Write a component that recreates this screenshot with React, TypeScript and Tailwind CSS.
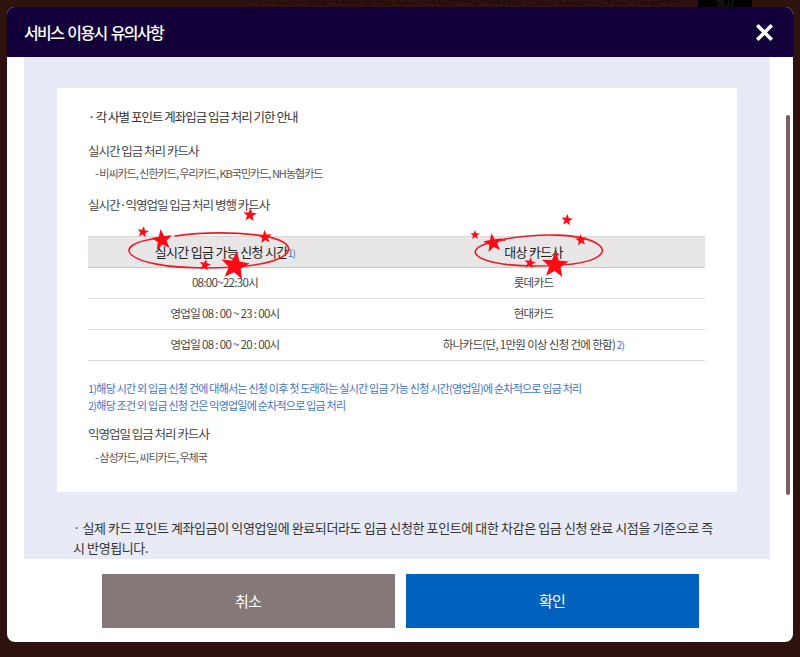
import React from "react";

const FONT = { fontFamily: '"Noto Sans CJK KR", "Noto Sans", sans-serif' };

function starPoints(cx: number, cy: number, r: number, rot = 0) {
  const pts: string[] = [];
  const inner = r * 0.42;
  for (let i = 0; i < 10; i++) {
    const rad = i % 2 === 0 ? r : inner;
    const a = ((-90 + rot + i * 36) * Math.PI) / 180;
    pts.push(`${(cx + rad * Math.cos(a)).toFixed(1)},${(cy + rad * Math.sin(a)).toFixed(1)}`);
  }
  return pts.join(" ");
}

const stars: [number, number, number, number][] = [
  [143, 232, 6, 10],
  [162, 240, 11, -8],
  [250, 215, 7, 5],
  [265, 237, 7, -5],
  [205, 265, 6, 12],
  [235, 266, 15, 8],
  [475, 235, 5, 0],
  [493, 243, 10, -10],
  [567, 220, 6, 6],
  [581, 240, 6, -6],
  [530, 263, 6, 10],
  [555, 265, 14, 4],
];

function Doodle() {
  return (
    <svg
      className="absolute left-0 top-0 pointer-events-none"
      width={680}
      height={404}
      viewBox="57 88 680 404"
    >
      <g fill="none" stroke="#ef1b24" strokeWidth={1.6} strokeLinecap="round">
        <path d="M160 238 C 105 244, 125 268, 205 268 C 280 268, 300 252, 283 242 C 268 233, 215 230, 175 236" />
        <path d="M505 240 C 455 246, 470 266, 535 266 C 600 266, 612 252, 596 243 C 580 234, 540 232, 500 240" />
      </g>
      <g fill="#ff0a14">
        {stars.map(([x, y, r, rot], i) => (
          <polygon key={i} points={starPoints(x, y, r, rot)} />
        ))}
      </g>
    </svg>
  );
}

export default function App() {
  return (
    <div className="relative w-[800px] h-[657px] overflow-hidden bg-[#2e1210]" style={FONT}>
      {/* underlying page, mostly covered */}
      <div className="flex items-start h-[8px] overflow-hidden">
        <div className="ml-[238px] mt-[-9px] text-[12px] leading-[16px] tracking-[-0.06em] text-[#1a0705] whitespace-nowrap">
          ・ 카드 포인트 입금의 최소 금액은 1포인트(1원)이며, 계좌입금 신청은 1포인트 단위로 가능합니다.
        </div>
        <div className="ml-auto mr-[48px] w-[54px] h-[8px] bg-[#050000] text-[10px] leading-[8px] text-[#222] text-center">
          예시
        </div>
      </div>

      {/* modal */}
      <div className="absolute left-[7px] top-[7px] w-[786px] h-[635px] rounded-[8px] bg-white overflow-hidden flex flex-col">
        <div className="h-[50px] shrink-0 bg-[#12003a] flex items-center pl-[17px] pr-[20px]">
          <div className="text-white text-[16px] font-medium tracking-[-0.1em] [word-spacing:2px]">서비스 이용시 유의사항</div>
          <svg className="ml-auto" width="17" height="17" viewBox="0 0 17 17">
            <path d="M2.5 2.5 L14.5 14.5 M14.5 2.5 L2.5 14.5" stroke="white" strokeWidth="3.6" strokeLinecap="square" />
          </svg>
        </div>

        <div className="flex h-[502px] shrink-0">
          <div className="ml-[17px] w-[746px] h-[502px] bg-[#e8eaf6] overflow-hidden">
            <div className="mt-[-15px] h-[16px] pl-[66px] text-[12px] leading-[16px] tracking-[-0.07em] text-[#555] whitespace-nowrap">
              ・ 카드 포인트 입금은 1포인트 1원으로 입금되며, 계좌입금 신청은 결제일 3영업일 전까지만 가능합니다.
            </div>
            <div className="relative ml-[33px] mt-[30px] w-[680px] h-[404px] bg-white pl-[31px] text-[#333]">
              <div className="pt-[21px] h-[37px] text-[12.5px] leading-[16px] tracking-[-0.08em] text-[#333]">
                · 각 사별 포인트 계좌입금 입금 처리 기한 안내
              </div>
              <div className="mt-[18px] h-[16px] text-[12.5px] leading-[16px] tracking-[-0.08em] text-[#444]">
                실시간 입금 처리 카드사
              </div>
              <div className="mt-[6px] h-[16px] pl-[7px] text-[11px] leading-[16px] tracking-[-0.09em] text-[#555]">
                - 비씨카드, 신한카드, 우리카드, KB국민카드, NH농협카드
              </div>
              <div className="mt-[16px] h-[16px] text-[12.5px] leading-[16px] tracking-[-0.08em] text-[#444]">
                실시간·익영업일 입금 처리 병행 카드사
              </div>

              <div className="mt-[23px] w-[617px] text-[11.5px] tracking-[-0.06em] text-[#444]">
                <div className="flex h-[32px] bg-[#e8e6e6] border-t border-[#d9d6d6] border-b border-b-[#cfcccc] items-center text-[13px] text-[#222]">
                  <div className="w-[274px] text-center">
                    실시간 입금 가능 신청 시간<span className="text-[#3d74c5] text-[10px]">1)</span>
                  </div>
                  <div className="flex-1 text-center">대상 카드사</div>
                </div>
                <div className="flex h-[31px] items-center border-b border-[#dddddd]">
                  <div className="w-[274px] text-center">08:00~22:30시</div>
                  <div className="flex-1 text-center">롯데카드</div>
                </div>
                <div className="flex h-[31px] items-center border-b border-[#dddddd]">
                  <div className="w-[274px] text-center">영업일 08 : 00 ~ 23 : 00시</div>
                  <div className="flex-1 text-center">현대카드</div>
                </div>
                <div className="flex h-[31px] items-center border-b border-[#dddddd]">
                  <div className="w-[274px] text-center">영업일 08 : 00 ~ 20 : 00시</div>
                  <div className="flex-1 text-center">
                    하나카드(단, 1만원 이상 신청 건에 한함)<span className="text-[#3d74c5] text-[10px]"> 2)</span>
                  </div>
                </div>
              </div>

              <div className="mt-[19px] h-[17px] text-[11px] leading-[17px] tracking-[-0.07em] text-[#3d74c5]">
                1)해당 시간 외 입금 신청 건에 대해서는 신청 이후 첫 도래하는 실시간 입금 가능 신청 시간(영업일)에 순차적으로 입금 처리
              </div>
              <div className="h-[17px] text-[11px] leading-[17px] tracking-[-0.07em] text-[#3d74c5]">
                2)해당 조건 외 입금 신청 건은 익영업일에 순차적으로 입금 처리
              </div>
              <div className="mt-[12px] h-[16px] text-[12.5px] leading-[16px] tracking-[-0.08em] text-[#444]">
                익영업일 입금 처리 카드사
              </div>
              <div className="mt-[7px] h-[16px] pl-[7px] text-[11px] leading-[16px] tracking-[-0.09em] text-[#555]">
                - 삼성카드, 씨티카드, 우체국
              </div>

              <Doodle />
            </div>

            <div className="mt-[26px] ml-[49px] w-[645px] text-[13px] leading-[20px] tracking-[-0.03em] text-[#333]">
              · 실제 카드 포인트 계좌입금이 익영업일에 완료되더라도 입금 신청한 포인트에 대한 차감은 입금 신청 완료 시점을 기준으로 즉시 반영됩니다.
            </div>
          </div>
          <div className="flex-1 relative">
            <div className="absolute left-[16px] top-[58px] w-[4px] h-[380px] rounded-full bg-[#7b615d]" />
          </div>
        </div>

        <div className="flex justify-center gap-[11px] mt-[15px]">
          <button className="w-[293px] h-[54px] bg-[#857878] text-white text-[15px] tracking-[-0.05em]">취소</button>
          <button className="w-[293px] h-[54px] bg-[#0062bd] text-white text-[15px] tracking-[-0.05em]">확인</button>
        </div>
      </div>
    </div>
  );
}
